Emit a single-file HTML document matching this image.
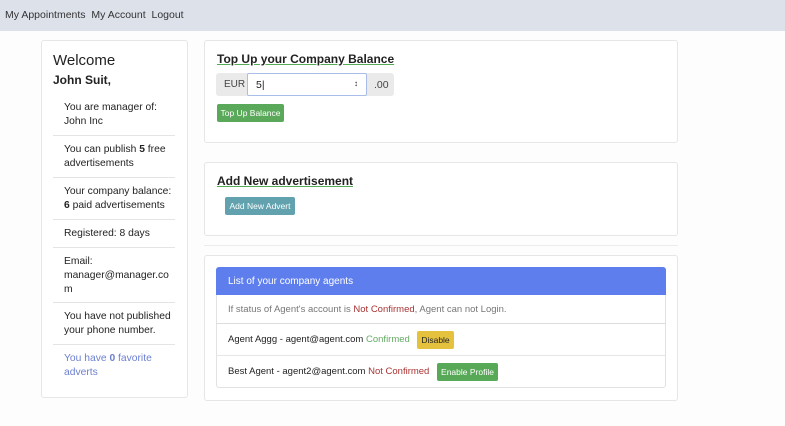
<!DOCTYPE html>
<html><head><meta charset="utf-8"><style>
*{box-sizing:border-box;margin:0;padding:0}
body{width:785px;height:426px;background:#fdfdfd;font-family:"Liberation Sans",sans-serif;font-size:10.5px;color:#222;position:relative;overflow:hidden}
.a{position:absolute;white-space:nowrap}
.nav{left:0;top:0;width:785px;height:31px;background:#dde1ea;padding:9px 5px;font-size:10.5px;color:#333}
.card{background:#fff;border:1px solid #e6e6e6;border-radius:3px}
.li{left:64px;width:110px;line-height:14px;font-size:10.3px}
.hr{left:53px;width:122px;height:1px;background:#e4e4e4}
.btn{position:absolute;color:#fff;font-size:8.5px;border-radius:2px;text-align:center;line-height:18px}
.ag{font-size:9.5px}
u{text-decoration-color:#5a5}
</style></head><body>
<div class="a nav">My Appointments&nbsp; My Account&nbsp; Logout</div>
<div class="a card" style="left:41px;top:40px;width:147px;height:358px"></div>
<div class="a" style="left:53px;top:52px;font-size:15px">Welcome</div>
<div class="a" style="left:53px;top:73px;font-size:12px;font-weight:bold">John Suit,</div>
<div class="a li" style="top:101px">You are manager of:<br>John Inc</div>
<div class="a hr" style="top:135px"></div>
<div class="a li" style="top:143px">You can publish <b>5</b> free<br>advertisements</div>
<div class="a hr" style="top:177px"></div>
<div class="a li" style="top:185px">Your company balance:<br><b>6</b> paid advertisements</div>
<div class="a hr" style="top:219px"></div>
<div class="a li" style="top:227px">Registered: 8 days</div>
<div class="a hr" style="top:247px"></div>
<div class="a li" style="top:255px">Email:<br>manager@manager.co<br>m</div>
<div class="a hr" style="top:302px"></div>
<div class="a li" style="top:310px">You have not published<br>your phone number.</div>
<div class="a hr" style="top:344px"></div>
<div class="a li" style="top:352px;color:#6c7fd0">You have <b>0</b> favorite<br>adverts</div>

<div class="a card" style="left:204px;top:40px;width:474px;height:103px"></div>
<div class="a" style="left:217px;top:52px;font-size:12px;font-weight:bold"><u>Top Up your Company Balance</u></div>
<div class="a" style="left:216px;top:73px;width:178px;height:23px;background:#eaeaea;border-radius:3px"></div>
<div class="a" style="left:224px;top:79px;font-size:10px;color:#444">EUR</div>
<div class="a" style="left:247px;top:73px;width:120px;height:23px;background:#fff;border:1px solid #a9bde8;border-radius:2px;padding:5px 8px;width:120px">5|<span style="position:absolute;right:8px;top:5px;font-size:8px">&#x2195;</span></div>
<div class="a" style="left:374px;top:79px;color:#444">.00</div>
<div class="btn" style="left:217px;top:104px;width:67px;background:#5aa95a">Top Up Balance</div>

<div class="a card" style="left:204px;top:162px;width:474px;height:74px"></div>
<div class="a" style="left:217px;top:174px;font-size:12px;font-weight:bold"><u>Add New advertisement</u></div>
<div class="btn" style="left:225px;top:197px;width:70px;background:#61a2ae">Add New Advert</div>
<div class="a" style="left:204px;top:245px;width:474px;height:1px;background:#ececec"></div>

<div class="a card" style="left:204px;top:255px;width:474px;height:146px"></div>
<div class="a" style="left:216px;top:267px;width:450px;height:121px;border:1px solid #e2e2e2;border-radius:3px"></div>
<div class="a" style="left:216px;top:267px;width:450px;height:28px;background:#5e7eed;border-radius:3px 3px 0 0;color:#fff;padding:9px 12px;font-size:10px">List of your company agents</div>
<div class="a ag" style="left:228px;top:304px;color:#777">If status of Agent's account is <span style="color:#a33">Not Confirmed</span>, Agent can not Login.</div>
<div class="a" style="left:216px;top:323px;width:450px;height:1px;background:#ddd"></div>
<div class="a ag" style="left:228px;top:334px">Agent Aggg - agent@agent.com <span style="color:#6a6">Confirmed</span></div>
<div class="btn" style="left:417px;top:331px;width:37px;background:#e5c23e;color:#222">Disable</div>
<div class="a" style="left:216px;top:355px;width:450px;height:1px;background:#e6e6e6"></div>
<div class="a ag" style="left:228px;top:366px">Best Agent - agent2@agent.com <span style="color:#a33">Not Confirmed</span></div>
<div class="btn" style="left:437px;top:363px;width:61px;background:#57a957">Enable Profile</div>
</body></html>
